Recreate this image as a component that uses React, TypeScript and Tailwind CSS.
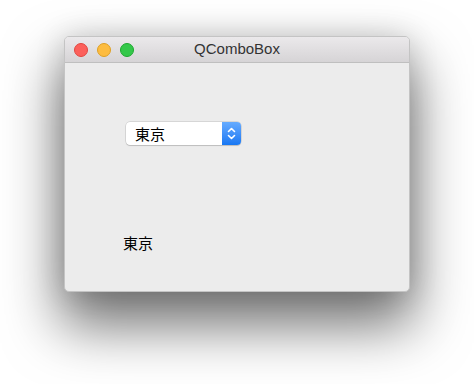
import React from "react";

export default function App() {
  return (
    <div className="w-[474px] h-[384px] bg-white pt-[36px] pl-[64px] overflow-hidden">
      <div className="w-[346px] h-[256px] rounded-[5px] bg-[#ececec] overflow-hidden border border-[#c4c4c4] shadow-[0_30px_55px_4px_rgba(0,0,0,0.55),0_0_30px_rgba(0,0,0,0.14)] flex flex-col">
        <div className="relative h-[26px] shrink-0 bg-gradient-to-b from-[#ebe9eb] to-[#d6d4d6] border-b border-[#bfbfbf] flex items-center">
          <div className="flex items-center gap-[9px] pl-[9px]">
            <div className="w-[14px] h-[14px] rounded-full bg-[#fc605b] border border-[#e2463f]" />
            <div className="w-[14px] h-[14px] rounded-full bg-[#fdbc40] border border-[#dfa023]" />
            <div className="w-[14px] h-[14px] rounded-full bg-[#34c84a] border border-[#1da82f]" />
          </div>
          <div className="absolute inset-0 flex items-center justify-center text-[15px] text-[#333333] font-['Liberation_Sans',sans-serif]">
            QComboBox
          </div>
        </div>
        <div className="flex flex-col pl-[58px] pt-[59px] font-['Noto_Sans_CJK_JP',sans-serif]">
          <div className="ml-[3px] w-[115px] h-[23px] flex rounded-[4px] bg-white shadow-[0_0_0_0.5px_rgba(0,0,0,0.18),0_1px_1px_rgba(0,0,0,0.12)] overflow-hidden">
            <div className="flex-1 flex items-center pl-[9px] text-[15px] leading-none text-black">東京</div>
            <div className="w-[19px] h-full bg-gradient-to-b from-[#65abff] to-[#1677f3] flex items-center justify-center">
              <svg width="9" height="15" viewBox="0 0 9 15" fill="none" stroke="white" strokeWidth="1.6" strokeLinecap="round" strokeLinejoin="round">
                <path d="M1.5 5.5 L4.5 2.5 L7.5 5.5" />
                <path d="M1.5 9.5 L4.5 12.5 L7.5 9.5" />
              </svg>
            </div>
          </div>
          <div className="mt-[88px] h-[20px] leading-[20px] text-[15px] text-black">東京</div>
        </div>
      </div>
    </div>
  );
}
